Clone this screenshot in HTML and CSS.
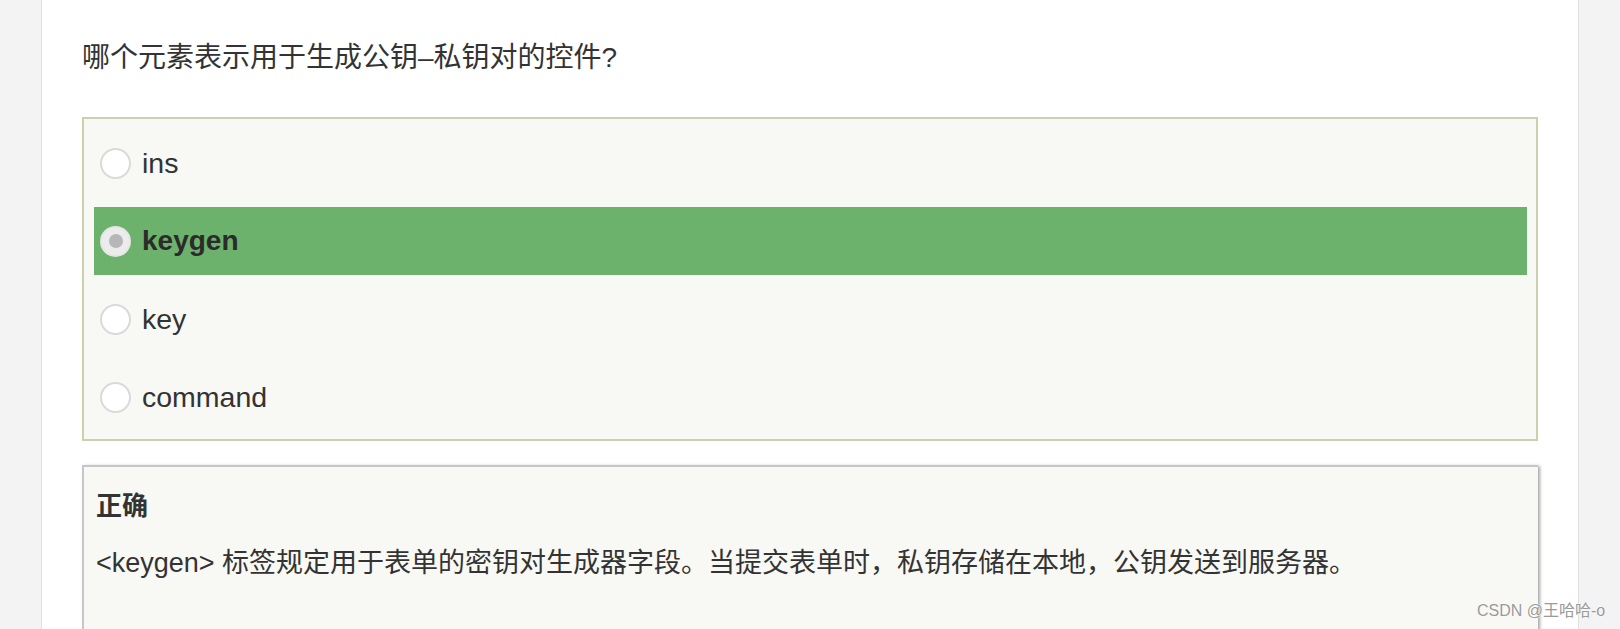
FILE: index.html
```html
<!DOCTYPE html>
<html lang="zh-CN">
<head>
<meta charset="utf-8">
<title>Quiz</title>
<link rel="stylesheet" href="styles.css">
</head>
<body>
<div class="page">
  <main class="card">
    <p class="question">哪个元素表示用于生成公钥–私钥对的控件?</p>
    <ul class="options">
      <li class="option"><span class="radio"></span><span class="label">ins</span></li>
      <li class="option selected"><span class="radio"></span><span class="label">keygen</span></li>
      <li class="option"><span class="radio"></span><span class="label">key</span></li>
      <li class="option"><span class="radio"></span><span class="label">command</span></li>
    </ul>
    <section class="explain">
      <h3 class="result">正确</h3>
      <p class="explain-text">&lt;keygen&gt; 标签规定用于表单的密钥对生成器字段。当提交表单时，私钥存储在本地，公钥发送到服务器。</p>
    </section>
  </main>
</div>
<div class="watermark">CSDN @王哈哈-o</div>
</body>
</html>
```
FILE: styles.css
```css
html, body {
  margin: 0;
  padding: 0;
  height: 100%;
  overflow: hidden;
}
body {
  background: #f3f3f3;
  font-family: "Liberation Sans", "Noto Sans CJK SC", sans-serif;
  color: #333;
}
.page {
  padding-left: 41px;
  height: 100%;
}
.card {
  box-sizing: border-box;
  width: 1538px;
  height: 100%;
  background: #fff;
  border-left: 1px solid #e0e0dc;
  border-right: 1px solid #e0e0dc;
  padding: 38px 40px 0 40px;
}
.question {
  margin: 0;
  font-size: 28px;
  line-height: 40px;
  color: #333;
}
.options {
  list-style: none;
  margin: 39px 0 0 0;
  padding: 10px 9px 8px 10px;
  background: #f8f8f4;
  border: 2px solid #c9d1ae;
  display: flex;
  flex-direction: column;
  gap: 10px;
}
.option {
  height: 68px;
  display: flex;
  align-items: center;
  padding-left: 6px;
}
.option.selected {
  background: #6cb26c;
}
.radio {
  box-sizing: border-box;
  width: 31px;
  height: 31px;
  border-radius: 50%;
  border: 2px solid #dadada;
  background: #fff;
  flex: none;
  display: flex;
  align-items: center;
  justify-content: center;
}
.selected .radio {
  background: #ececec;
  border-color: #e6e6e6;
}
.selected .radio::after {
  content: "";
  width: 14px;
  height: 14px;
  border-radius: 50%;
  background: #b7b7ba;
}
.label {
  margin-left: 11px;
  font-size: 28.5px;
  color: #333;
}
.selected .label {
  font-weight: bold;
  font-size: 28px;
  color: #2b2b2b;
}
.explain {
  margin-top: 24px;
  background: #f8f8f4;
  border-top: 2px solid #c6c6c6;
  border-left: 2px solid #c6c6c6;
  box-shadow: 2px 1px 3px rgba(0, 0, 0, 0.35);
  padding: 19px 12px 60px 12px;
}
.result {
  margin: 0;
  font-size: 26px;
  line-height: 40px;
  font-weight: bold;
  color: #333;
}
.explain-text {
  margin: 17px 0 0 0;
  font-size: 27px;
  line-height: 40px;
  color: #333;
}
.watermark {
  position: absolute;
  left: 1477px;
  top: 601px;
  font-size: 16px;
  line-height: 20px;
  color: #9a9a9a;
  text-shadow: 0 0 2px #fff, 0 0 1px #fff;
  white-space: nowrap;
}
```
